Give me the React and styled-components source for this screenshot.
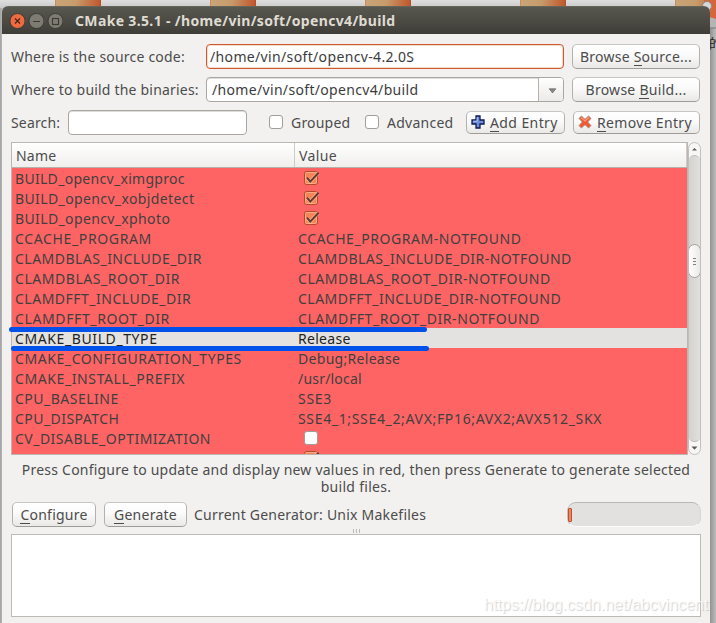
import React from 'react';
import styled, { createGlobalStyle } from 'styled-components'

const GlobalStyle = createGlobalStyle`
  * {
    box-sizing: border-box;
  }
  body {
    margin: 0;
    overflow: hidden;
    font-family: 'Noto Sans', 'Open Sans', sans-serif;
    font-size: 14px;
    color: #4c4c4c;
  }
`

const Desktop = styled.div`
  position: relative;
  width: 716px;
  height: 623px;
  padding: 6px 6px 0 2px;
  overflow: hidden;
  background: linear-gradient(to right, #a3a3a3 0, #b4b4b4 2px, #b4b4b4 709px, #929292 710px, #bdbdbd 716px);
`

/* strip of wallpaper that shows above the window */
const Wallpaper = styled.div`
  position: absolute;
  top: 0;
  left: 0;
  right: 0;
  height: 8px;
  padding-left: 55px;
  display: flex;
  gap: 109px;
  background: linear-gradient(#dedede, #c9c9c9);
`

const Folder = styled.div`
  flex: none;
  width: 46px;
  height: 8px;
  border-left: 1px solid #d08a62;
  border-right: 1px solid #b5512a;
  background: linear-gradient(100deg, #c9a578 0%, #c79c6c 45%, #c46e42 80%, #c2542a 100%);
`

const Corner = styled.svg`
  position: absolute;
  top: 0;
  right: 0;
`

const DesktopLabel = styled.span`
  position: absolute;
  left: 709px;
  top: 35px;
  font: 13px/16px 'Noto Sans CJK SC', sans-serif;
  color: #222;
`

const Window = styled.div`
  position: relative;
  width: 708px;
  height: 617px;
  display: flex;
  flex-direction: column;
  border-radius: 6px 6px 0 0;
  background: #f2f1ef;
  overflow: hidden;
`

const TitleBar = styled.div`
  flex: none;
  height: 28px;
  padding: 0 0 0 7px;
  display: flex;
  align-items: center;
  gap: 3px;
  border-top: 1px solid #65645b;
  background: linear-gradient(#59584f, #3e3d38);
`

const Title = styled.div`
  margin-left: 9px;
  font-weight: 700;
  font-size: 14px;
  letter-spacing: 0.35px;
  color: #dfdbd2;
  white-space: pre;
`

const Body = styled.div`
  flex: 1;
  display: flex;
  flex-direction: column;
  padding: 10px 9px 6px;
`

const Row = styled.div`
  flex: none;
  display: flex;
  align-items: center;
  height: 25px;
  margin-bottom: ${p => (p.$last ? 0 : 8)}px;
`

const Text = styled.span`
  white-space: pre;
  line-height: 20px;
  letter-spacing: ${p => p.$track || 0}px;
`

const FormLabel = styled(Text)`
  flex: none;
  width: ${p => p.$width}px;
`

const Input = styled.div`
  width: ${p => p.$width}px;
  height: 25px;
  padding-left: ${p => p.$pad || 3}px;
  display: flex;
  align-items: center;
  border: 1px solid ${p => (p.$focus ? '#d0582f' : '#aaa7a2')};
  border-radius: 4px;
  box-shadow: ${p => (p.$focus ? 'inset 0 0 0 1px #f5ddd3' : 'inset 0 1px 0 #dedcd9')};
  background: #fff;
  color: #3c3c3c;
  overflow: hidden;
`

const DropArrow = styled.div`
  width: 25px;
  height: 23px;
  margin-left: auto;
  padding: 3px 0 0 3px;
  display: flex;
  align-items: center;
  justify-content: center;
  border-left: 1px solid #b5b2ad;
  background: linear-gradient(#fff, #ebeae8);
`

const Button = styled.div`
  flex: none;
  width: ${p => p.$width}px;
  height: ${p => p.$height || 25}px;
  margin-left: ${p => p.$gap || 0}px;
  display: flex;
  align-items: center;
  justify-content: center;
  border: 1px solid #b4b1ac;
  border-top-color: #c9c6c2;
  border-bottom-color: #9f9c97;
  border-radius: 5px;
  background: linear-gradient(#fff, #fafafa 45%, #e9e8e6);
`

const IconButton = styled(Button)`
  justify-content: flex-start;
  padding-left: 4px;

  svg {
    position: relative;
    top: -1px;
  }
`

const Mnemonic = styled.span`
  display: inline-block;
  height: 18px;
  line-height: 17px;
  border-bottom: 1px solid #4c4c4c;
`

const Check = styled.div`
  flex: none;
  width: 14px;
  height: 14px;
  border: 1px solid #a19e99;
  border-radius: 3px;
  background: #fff;
`

const TableArea = styled.div`
  flex: none;
  display: flex;
  height: 313px;
  margin-top: -1px;
`

const Table = styled.div`
  width: 677px;
  height: 313px;
  border: 1px solid #bbb7b0;
  overflow: hidden;
  background: #ff6464;
`

const HeaderRow = styled.div`
  display: grid;
  grid-template-columns: 283px 1fr;
  height: 25px;
  border-bottom: 1px solid #b5b2ab;
  background: linear-gradient(#fff, #f0efed);
`

const HeaderCell = styled.div`
  padding-left: 4px;
  display: flex;
  align-items: center;
  padding-top: 1px;
  border-right: 1px solid #cfccc8;
`

const Entry = styled.div`
  display: grid;
  grid-template-columns: 283px 1fr;
  height: 20px;
  color: ${p => (p.$selected ? '#222' : '#42403f')};
  background: ${p => (p.$selected ? '#e3e2e0' : '#ff6464')};
`

const Cell = styled.div`
  padding-left: 3px;
  padding-top: 1px;
  display: flex;
  align-items: center;
  height: 20px;
`

const CheckCell = styled(Cell)`
  align-items: flex-start;
  padding-left: ${p => p.$pad}px;
  padding-top: ${p => p.$top}px;
`

/* hand drawn marker strokes around the selected entry */
const Marker = styled.div`
  position: absolute;
  left: ${p => p.$left}px;
  top: ${p => p.$top}px;
  width: ${p => p.$width}px;
  height: 5px;
  border-radius: 3px;
  background: #0050ea;
`

const ScrollBar = styled.div`
  width: 13px;
  height: 313px;
  display: flex;
  flex-direction: column;
  align-items: center;
  border: 1px solid #c2bfbb;
  border-radius: 7px;
  background: #f7f6f5;
  overflow: hidden;
`

const Groove = styled.div`
  width: 11px;
  height: 287px;
  padding-top: 88px;
  border-top: 1px solid #bbb8b3;
  border-bottom: 1px solid #bbb8b3;
  border-radius: 6px;
  background: linear-gradient(to right, #d4d2cf, #e2e0de);
`

const Thumb = styled.div`
  width: 13px;
  height: 34px;
  margin-left: -1px;
  display: flex;
  flex-direction: column;
  align-items: center;
  justify-content: center;
  gap: 2px;
  border: 1px solid #a4a19c;
  border-radius: 7px;
  background: linear-gradient(to right, #fff, #ebe9e7);

  i {
    width: 3px;
    height: 1px;
    background: #85827e;
  }
`

const ArrowBox = styled.div`
  flex: none;
  height: 12px;
  display: flex;
  align-items: center;
`

const Hint = styled.div`
  flex: none;
  height: 47px;
  padding-top: 6px;
  display: flex;
  flex-direction: column;
  align-items: center;

  span {
    line-height: 17px;
  }
`

const Progress = styled.div`
  width: 134px;
  height: 25px;
  margin-left: auto;
  display: flex;
  align-items: center;
  border: 1px solid #d8d6d3;
  border-top-color: #b9b7b3;
  border-left-color: #c4c1bd;
  border-bottom-color: #fafafa;
  border-radius: 9px;
  background: #e2e1df;
`

const Bar = styled.div`
  width: 4px;
  height: 14px;
  border: 1px solid #b9532e;
  border-radius: 1px;
  background: #f08763;
`

const Splitter = styled.div`
  flex: none;
  height: 7px;
  display: flex;
  justify-content: center;
  align-items: center;
  gap: 2px;

  i {
    width: 1px;
    height: 4px;
    background: #bcb9b5;
  }
`

const Output = styled.div`
  flex: none;
  height: 83px;
  border: 1px solid #bebbb5;
  background: #fff;
`

const Watermark = styled.div`
  position: absolute;
  left: 484px;
  top: 595px;
  font: 16px/20px 'Liberation Sans', sans-serif;
  white-space: pre;
  color: rgba(255, 255, 255, 0.8);
  text-shadow: 1px 1px 1px rgba(140, 140, 140, 0.4);
`

const entries = [
  { name: 'BUILD_opencv_ximgproc', track: 0.3, checked: true },
  { name: 'BUILD_opencv_xobjdetect', track: 0.38, checked: true },
  { name: 'BUILD_opencv_xphoto', track: 0.37, checked: true },
  { name: 'CCACHE_PROGRAM', track: 0.64, value: 'CCACHE_PROGRAM-NOTFOUND', valueTrack: 0.56 },
  { name: 'CLAMDBLAS_INCLUDE_DIR', track: 0.48, value: 'CLAMDBLAS_INCLUDE_DIR-NOTFOUND', valueTrack: 0.47 },
  { name: 'CLAMDBLAS_ROOT_DIR', track: 0.55, value: 'CLAMDBLAS_ROOT_DIR-NOTFOUND', valueTrack: 0.55 },
  { name: 'CLAMDFFT_INCLUDE_DIR', track: 0.5, value: 'CLAMDFFT_INCLUDE_DIR-NOTFOUND', valueTrack: 0.49 },
  { name: 'CLAMDFFT_ROOT_DIR', track: 0.62, value: 'CLAMDFFT_ROOT_DIR-NOTFOUND', valueTrack: 0.57 },
  { name: 'CMAKE_BUILD_TYPE', track: 0.6, value: 'Release', valueTrack: 0.3, selected: true },
  { name: 'CMAKE_CONFIGURATION_TYPES', track: 0.58, value: 'Debug;Release', valueTrack: 0.3 },
  { name: 'CMAKE_INSTALL_PREFIX', track: 0.6, value: '/usr/local', valueTrack: 0.2 },
  { name: 'CPU_BASELINE', track: 0.5, value: 'SSE3', valueTrack: 0.7 },
  { name: 'CPU_DISPATCH', track: 0.45, value: 'SSE4_1;SSE4_2;AVX;FP16;AVX2;AVX512_SKX', valueTrack: 0.66 },
  { name: 'CV_DISABLE_OPTIMIZATION', track: 0.48, checked: false },
  { name: '', checked: true },
]

function WindowButton({ kind }) {
  const close = kind === 'close'
  return (
    <svg width="16" height="18" viewBox="0 0 16 18">
      <circle cx="8.5" cy="9" r="7.5" fill={close ? '#ee6a41' : '#7d7b72'} stroke="#35342f" strokeWidth="0.8" />
      {close && <path d="M6 6.5l5 5M11 6.5l-5 5" stroke="#45241a" strokeWidth="1.2" />}
      {kind === 'min' && <path d="M5 9.5h7" stroke="#3b3a35" strokeWidth="1.2" />}
      {kind === 'max' && <rect x="5.5" y="6.5" width="6" height="6" fill="none" stroke="#3b3a35" strokeWidth="1.1" />}
    </svg>
  )
}

function Tick() {
  return (
    <svg width="17" height="16" viewBox="0 0 17 16">
      <rect x="1.5" y="1.5" width="13" height="13" rx="2" fill="#f58456" stroke="#b4492a" />
      <rect x="2.5" y="2.5" width="11" height="11" rx="1" fill="none" stroke="#f9ab85" />
      <path d="M4 8l3.3 3.8L15.3 2.8" fill="none" stroke="#ffc7a8" strokeWidth="3.6" opacity="0.6" />
      <path d="M4 7.6l3.3 4L15.6 2.7" fill="none" stroke="#64392c" strokeWidth="2" />
    </svg>
  )
}

function Arrow({ up, small }) {
  return (
    <svg width="9" height="6" viewBox="0 0 9 6">
      <path
        d={small ? (up ? 'M2 4.5h5L4.5 2z' : 'M1.5 1.5h6L4.5 4.7z') : 'M1.2 .8h6.6L4.5 5z'}
        fill={small ? '#5d5b58' : '#8a8885'}
        stroke={small ? 'none' : '#64625f'}
        strokeWidth="0.7"
      />
    </svg>
  )
}

function Plus() {
  return (
    <svg width="14" height="14" viewBox="0 0 14 14">
      <path d="M5 1h4v4h4v4H9v4H5V9H1V5h4z" fill="#6d8fdd" stroke="#10194f" strokeWidth="1.3" />
      <path d="M6.2 2.2v4H2.2" fill="none" stroke="#b2c6f5" />
    </svg>
  )
}

function Cross() {
  return (
    <svg width="14" height="14" viewBox="0 0 14 14">
      <path
        d="M3.4 1L7 4.3 10.6 1 13 3.4 9.7 7 13 10.6 10.6 13 7 9.7 3.4 13 1 10.6 4.3 7 1 3.4z"
        fill="#f4572e"
        stroke="#a8958a"
        strokeWidth="1"
      />
      <path d="M3 2.6L7 6l3.8-3.4" fill="none" stroke="#ff9a7c" strokeWidth="1.3" />
    </svg>
  )
}

const CheckLabel = styled.div`
  display: flex;
  align-items: center;
  gap: 8px;
  margin-left: ${p => p.$gap}px;

  ${Check} {
    margin-top: -1px;
  }
`

const IconText = styled(Text)`
  margin-left: 5px;
`

const Status = styled(Text)`
  margin-left: 7px;
`

function App() {
  return (
    <Desktop>
      <GlobalStyle />
      <Wallpaper>
        {[0, 1, 2, 3, 4].map(i => <Folder key={i} />)}
      </Wallpaper>
      <Corner width="16" height="32" viewBox="0 0 16 32">
        <path d="M4 0h12v20H8z" fill="#d2673a" />
        <circle cx="7" cy="6" r="4.5" fill="#d6d6d6" stroke="#8b8b8b" />
        <path d="M9 17l7 2v9H9z" fill="#b5b5b5" />
        <path d="M9 28h7" stroke="#777" />
      </Corner>
      <DesktopLabel>的</DesktopLabel>
      <Window>
        <TitleBar>
          <WindowButton kind="close" />
          <WindowButton kind="min" />
          <WindowButton kind="max" />
          <Title>CMake 3.5.1 - /home/vin/soft/opencv4/build</Title>
        </TitleBar>
        <Body>
          <Row>
            <FormLabel $width={195} $track={0.2}>Where is the source code:</FormLabel>
            <Input $width={358} $focus>
              <Text $track={0.35}>/home/vin/soft/opencv-4.2.0S</Text>
            </Input>
            <Button $width={128} $gap={8}>
              <Text $track={0.25}>Browse <Mnemonic>S</Mnemonic>ource...</Text>
            </Button>
          </Row>
          <Row>
            <FormLabel $width={195} $track={0.2}>Where to build the binaries:</FormLabel>
            <Input $width={358} $pad={5}>
              <Text $track={0.33}>/home/vin/soft/opencv4/build</Text>
              <DropArrow><Arrow /></DropArrow>
            </Input>
            <Button $width={128} $gap={8}>
              <Text $track={0.27}>Browse <Mnemonic>B</Mnemonic>uild...</Text>
            </Button>
          </Row>
          <Row>
            <FormLabel $width={57} $track={0.15}>Search:</FormLabel>
            <Input $width={179} />
            <CheckLabel $gap={22}>
              <Check />
              <FormLabel $width={59} $track={0.2}>Grouped</FormLabel>
            </CheckLabel>
            <CheckLabel $gap={15}>
              <Check />
              <FormLabel $width={66} $track={0.25}>Advanced</FormLabel>
            </CheckLabel>
            <IconButton $width={99} $height={23} $gap={13}>
              <Plus />
              <IconText $track={0.4}><Mnemonic>A</Mnemonic>dd Entry</IconText>
            </IconButton>
            <IconButton $width={127} $height={23} $gap={8}>
              <Cross />
              <IconText $track={0.33}><Mnemonic>R</Mnemonic>emove Entry</IconText>
            </IconButton>
          </Row>
          <TableArea>
            <Table>
              <HeaderRow>
                <HeaderCell><Text $track={0.2}>Name</Text></HeaderCell>
                <HeaderCell><Text $track={0.35}>Value</Text></HeaderCell>
              </HeaderRow>
              {entries.map((e, i) => (
                <Entry key={i} $selected={e.selected}>
                  <Cell><Text $track={e.track}>{e.name}</Text></Cell>
                  {e.value && <Cell><Text $track={e.valueTrack}>{e.value}</Text></Cell>}
                  {e.checked === true && <CheckCell $pad={8} $top={2}><Tick /></CheckCell>}
                  {e.checked === false && <CheckCell $pad={9} $top={3}><Check /></CheckCell>}
                </Entry>
              ))}
            </Table>
            <ScrollBar>
              <ArrowBox><Arrow up small /></ArrowBox>
              <Groove>
                <Thumb><i /><i /><i /></Thumb>
              </Groove>
              <ArrowBox><Arrow small /></ArrowBox>
            </ScrollBar>
          </TableArea>
          <Hint>
            <Text $track={0.215}>Press Configure to update and display new values in red, then press Generate to generate selected</Text>
            <Text $track={0.3}>build files.</Text>
          </Hint>
          <Row $last>
            <Button $width={84} $gap={1}><Text $track={0.22}><Mnemonic>C</Mnemonic>onfigure</Text></Button>
            <Button $width={83} $gap={8}><Text $track={0.25}><Mnemonic>G</Mnemonic>enerate</Text></Button>
            <Status $track={0.22}>Current Generator: Unix Makefiles</Status>
            <Progress><Bar /></Progress>
          </Row>
          <Splitter><i /><i /><i /></Splitter>
          <Output />
        </Body>
      </Window>
      <Marker $left={9} $top={327} $width={418} />
      <Marker $left={11} $top={346} $width={418} />
      <Watermark>https://blog.csdn.net/abcvincent</Watermark>
    </Desktop>
  );
}

export default App;
